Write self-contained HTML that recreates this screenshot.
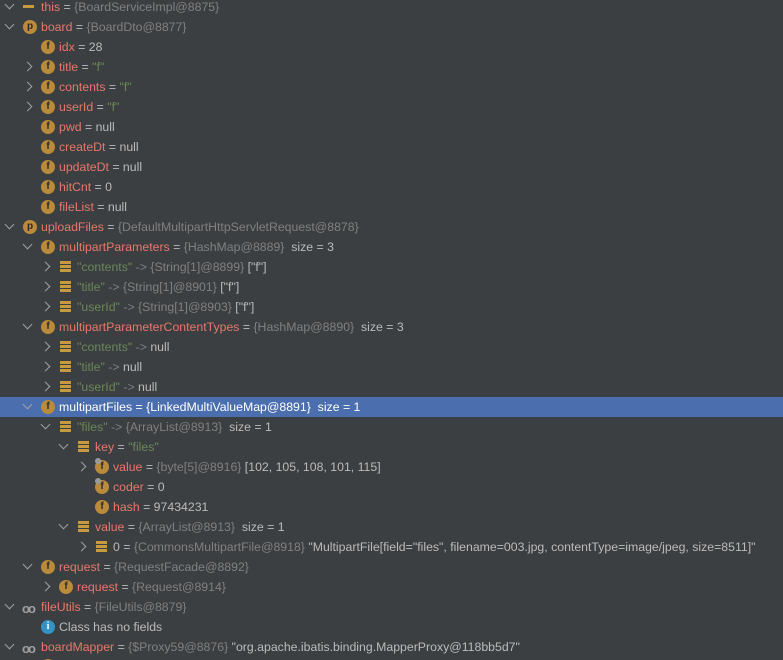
<!DOCTYPE html>
<html style="height:660px;overflow:hidden"><head><meta charset="utf-8"><style>
html,body{height:660px}
body{margin:0;width:783px;height:660px;background:#3c3f41;overflow:hidden;font-family:"Liberation Sans","Noto Sans CJK KR",sans-serif;font-size:12.3px;color:#bbbbbb;position:relative}
.r{position:absolute;left:0;width:783px;height:20px;line-height:20px;white-space:nowrap}
.sel{background:#4b6eaf}
.ar{position:absolute;top:6px;width:6px;height:6px;border-right:1.5px solid #a0a0a0;border-bottom:1.5px solid #a0a0a0}
.dn{transform:rotate(45deg);top:4px}
.rt{transform:rotate(-45deg)}
.ic{position:absolute;top:3px;width:14px;height:14px;border-radius:50%;background:#b98b3a;color:#2b2b2b;font-size:10px;line-height:14px;text-align:center;font-weight:bold}
.ls{position:absolute;top:4px;width:11px;height:11px;background:linear-gradient(#c89a40 0 3px,transparent 3px 4px,#c89a40 4px 7px,transparent 7px 8px,#c89a40 8px 11px)}
.gl{position:absolute;top:2px;color:#a0a0a0;font-size:13px;font-weight:bold;letter-spacing:-2px}
.inf{background:#3592c4;color:#fff;font-family:"Liberation Serif",serif}
.t{position:absolute;top:0}
.n{color:#e8776b}
.s{color:#6a8759}
.g{color:#808080}
.dot{position:absolute;top:1px;width:6px;height:6px;border-radius:50%;background:#9a9a9a}
</style></head><body>
<div class="r" style="top:-3px"><div class="ar dn" style="left:6px"></div><div class="ls" style="left:23px;top:8px;height:4px"></div><span class="t" style="left:41px"><span class="n">this</span> = <span class="g">{BoardServiceImpl@8875}</span></span></div>
<div class="r" style="top:17px"><div class="ar dn" style="left:6px"></div><div class="ic" style="left:23px">p</div><span class="t" style="left:41px"><span class="n">board</span> = <span class="g">{BoardDto@8877}</span></span></div>
<div class="r" style="top:37px"><div class="ic" style="left:41px">f</div><span class="t" style="left:59px"><span class="n">idx</span> = 28</span></div>
<div class="r" style="top:57px"><div class="ar rt" style="left:24px"></div><div class="ic" style="left:41px">f</div><span class="t" style="left:59px"><span class="n">title</span> = <span class="s">"f"</span></span></div>
<div class="r" style="top:77px"><div class="ar rt" style="left:24px"></div><div class="ic" style="left:41px">f</div><span class="t" style="left:59px"><span class="n">contents</span> = <span class="s">"f"</span></span></div>
<div class="r" style="top:97px"><div class="ar rt" style="left:24px"></div><div class="ic" style="left:41px">f</div><span class="t" style="left:59px"><span class="n">userId</span> = <span class="s">"f"</span></span></div>
<div class="r" style="top:117px"><div class="ic" style="left:41px">f</div><span class="t" style="left:59px"><span class="n">pwd</span> = null</span></div>
<div class="r" style="top:137px"><div class="ic" style="left:41px">f</div><span class="t" style="left:59px"><span class="n">createDt</span> = null</span></div>
<div class="r" style="top:157px"><div class="ic" style="left:41px">f</div><span class="t" style="left:59px"><span class="n">updateDt</span> = null</span></div>
<div class="r" style="top:177px"><div class="ic" style="left:41px">f</div><span class="t" style="left:59px"><span class="n">hitCnt</span> = 0</span></div>
<div class="r" style="top:197px"><div class="ic" style="left:41px">f</div><span class="t" style="left:59px"><span class="n">fileList</span> = null</span></div>
<div class="r" style="top:217px"><div class="ar dn" style="left:6px"></div><div class="ic" style="left:23px">p</div><span class="t" style="left:41px"><span class="n">uploadFiles</span> = <span class="g">{DefaultMultipartHttpServletRequest@8878}</span></span></div>
<div class="r" style="top:237px"><div class="ar dn" style="left:24px"></div><div class="ic" style="left:41px">f</div><span class="t" style="left:59px"><span class="n">multipartParameters</span> = <span class="g">{HashMap@8889}</span>&nbsp; size = 3</span></div>
<div class="r" style="top:257px"><div class="ar rt" style="left:42px"></div><div class="ls" style="left:60px"></div><span class="t" style="left:77px"><span class="s">"contents"</span> <span class="g">-&gt; {String[1]@8899}</span> ["f"]</span></div>
<div class="r" style="top:277px"><div class="ar rt" style="left:42px"></div><div class="ls" style="left:60px"></div><span class="t" style="left:77px"><span class="s">"title"</span> <span class="g">-&gt; {String[1]@8901}</span> ["f"]</span></div>
<div class="r" style="top:297px"><div class="ar rt" style="left:42px"></div><div class="ls" style="left:60px"></div><span class="t" style="left:77px"><span class="s">"userId"</span> <span class="g">-&gt; {String[1]@8903}</span> ["f"]</span></div>
<div class="r" style="top:317px"><div class="ar dn" style="left:24px"></div><div class="ic" style="left:41px">f</div><span class="t" style="left:59px"><span class="n">multipartParameterContentTypes</span> = <span class="g">{HashMap@8890}</span>&nbsp; size = 3</span></div>
<div class="r" style="top:337px"><div class="ar rt" style="left:42px"></div><div class="ls" style="left:60px"></div><span class="t" style="left:77px"><span class="s">"contents"</span> <span class="g">-&gt;</span> null</span></div>
<div class="r" style="top:357px"><div class="ar rt" style="left:42px"></div><div class="ls" style="left:60px"></div><span class="t" style="left:77px"><span class="s">"title"</span> <span class="g">-&gt;</span> null</span></div>
<div class="r" style="top:377px"><div class="ar rt" style="left:42px"></div><div class="ls" style="left:60px"></div><span class="t" style="left:77px"><span class="s">"userId"</span> <span class="g">-&gt;</span> null</span></div>
<div class="r sel" style="top:397px;color:#fff"><div class="ar dn" style="left:24px"></div><div class="ic" style="left:41px">f</div><span class="t" style="left:59px">multipartFiles = {LinkedMultiValueMap@8891}&nbsp; size = 1</span></div>
<div class="r" style="top:417px"><div class="ar dn" style="left:42px"></div><div class="ls" style="left:60px"></div><span class="t" style="left:77px"><span class="s">"files"</span> <span class="g">-&gt; {ArrayList@8913}</span>&nbsp; size = 1</span></div>
<div class="r" style="top:437px"><div class="ar dn" style="left:60px"></div><div class="ls" style="left:78px"></div><span class="t" style="left:95px"><span class="n">key</span> = <span class="s">"files"</span></span></div>
<div class="r" style="top:457px"><div class="ar rt" style="left:78px"></div><div class="ic" style="left:95px">f</div><div class="dot" style="left:95px"></div><span class="t" style="left:113px"><span class="n">value</span> = <span class="g">{byte[5]@8916}</span> [102, 105, 108, 101, 115]</span></div>
<div class="r" style="top:477px"><div class="ic" style="left:95px">f</div><div class="dot" style="left:95px"></div><span class="t" style="left:113px"><span class="n">coder</span> = 0</span></div>
<div class="r" style="top:497px"><div class="ic" style="left:95px">f</div><span class="t" style="left:113px"><span class="n">hash</span> = 97434231</span></div>
<div class="r" style="top:517px"><div class="ar dn" style="left:60px"></div><div class="ls" style="left:78px"></div><span class="t" style="left:95px"><span class="n">value</span> = <span class="g">{ArrayList@8913}</span>&nbsp; size = 1</span></div>
<div class="r" style="top:537px"><div class="ar rt" style="left:78px"></div><div class="ls" style="left:96px"></div><span class="t" style="left:113px">0 = <span class="g">{CommonsMultipartFile@8918}</span> "MultipartFile[field="files", filename=003.jpg, contentType=image/jpeg, size=8511]"</span></div>
<div class="r" style="top:557px"><div class="ar dn" style="left:24px"></div><div class="ic" style="left:41px">f</div><span class="t" style="left:59px"><span class="n">request</span> = <span class="g">{RequestFacade@8892}</span></span></div>
<div class="r" style="top:577px"><div class="ar rt" style="left:42px"></div><div class="ic" style="left:59px">f</div><span class="t" style="left:77px"><span class="n">request</span> = <span class="g">{Request@8914}</span></span></div>
<div class="r" style="top:597px"><div class="ar dn" style="left:6px"></div><div class="gl" style="left:22px">oo</div><span class="t" style="left:41px"><span class="n">fileUtils</span> = <span class="g">{FileUtils@8879}</span></span></div>
<div class="r" style="top:617px"><div class="ic inf" style="left:41px">i</div><span class="t" style="left:59px">Class has no fields</span></div>
<div class="r" style="top:637px"><div class="ar dn" style="left:6px"></div><div class="gl" style="left:22px">oo</div><span class="t" style="left:41px"><span class="n">boardMapper</span> = <span class="g">{$Proxy59@8876}</span> "org.apache.ibatis.binding.MapperProxy@118bb5d7"</span></div>
<div class="r" style="top:656px;height:4px;overflow:hidden"><div class="ic" style="left:41px;top:3px"></div></div>
</body></html>
